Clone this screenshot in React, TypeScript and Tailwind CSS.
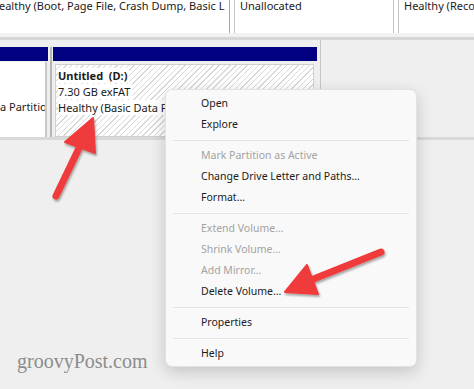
import React from 'react';

const font = { fontFamily: '"Noto Sans", "Open Sans", sans-serif' };

type Item = { label: string; disabled?: boolean } | 'sep';

const menu: Item[] = [
  { label: 'Open' },
  { label: 'Explore' },
  'sep',
  { label: 'Mark Partition as Active', disabled: true },
  { label: 'Change Drive Letter and Paths…' },
  { label: 'Format…' },
  'sep',
  { label: 'Extend Volume…', disabled: true },
  { label: 'Shrink Volume…', disabled: true },
  { label: 'Add Mirror…', disabled: true },
  { label: 'Delete Volume…' },
  'sep',
  { label: 'Properties' },
  'sep',
  { label: 'Help' },
];

const Arrows = () => (
  <svg className="absolute inset-0 pointer-events-none" width="474" height="389" viewBox="0 0 474 389">
    <defs>
      <filter id="sh" x="-20%" y="-20%" width="140%" height="140%">
        <feDropShadow dx="1" dy="2" stdDeviation="1.2" floodColor="#000" floodOpacity="0.35" />
      </filter>
    </defs>
    <g filter="url(#sh)" fill="#ef3b3b" stroke="#ef3b3b">
      <line x1="56" y1="196" x2="80" y2="146" strokeWidth="7" strokeLinecap="round" />
      <polygon points="93,118 65,142 95,153" strokeWidth="2" strokeLinejoin="round" />
      <line x1="381" y1="252" x2="311" y2="280" strokeWidth="7" strokeLinecap="round" />
      <polygon points="285,292 307,265 318,294" strokeWidth="2" strokeLinejoin="round" />
    </g>
  </svg>
);

export default function App() {
  return (
    <div className="relative w-[474px] h-[389px] overflow-hidden bg-[#efefef] text-[10.5px] text-[#1b1b1b]" style={font}>
      {/* top volume strip */}
      <div className="flex h-[33px] bg-white text-[11px]">
        <div className="w-[230px] shrink-0 border-r border-[#a8a8a8] overflow-hidden">
          <div className="-mt-[2px] whitespace-nowrap -ml-[1px] leading-[16px]">ealthy (Boot, Page File, Crash Dump, Basic L</div>
        </div>
        <div className="w-[160px] shrink-0 ml-[4px] border-l border-r border-[#c4c4c4] overflow-hidden">
          <div className="-mt-[2px] pl-[5px] whitespace-nowrap leading-[16px]">Unallocated</div>
        </div>
        <div className="flex-1 ml-[4px] border-l border-[#c4c4c4] overflow-hidden">
          <div className="-mt-[2px] pl-[5px] whitespace-nowrap leading-[16px]">Healthy (Recovery Partition)</div>
        </div>
      </div>
      <div className="h-[4px] bg-[#f1f1f1]" />
      <div className="h-[3px] bg-[#d6d6d6]" />

      {/* disk row */}
      <div className="flex h-[100px] border-b-[3px] border-[#d9d9d9] text-[11px]">
        <div className="w-[48px] shrink-0 pt-[7px] flex flex-col">
          <div className="h-[14px] bg-[#000080]" />
          <div className="flex-1 mt-[1px] mr-[1px] bg-white border-r-2 border-[#c8c8c8] overflow-hidden pt-[37px]">
            <div className="whitespace-nowrap text-right pr-[3px] leading-[16px]">a Partitio</div>
          </div>
        </div>
        <div className="w-[5px] shrink-0 flex justify-center">
          <div className="w-[2px] bg-[#b4b4b4] mt-[7px]" />
        </div>
        <div className="w-[264px] shrink-0 pt-[7px] flex flex-col">
          <div className="h-[14px] bg-[#000080]" />
          <div className="flex-1 mt-[3px] ml-[2px] mr-[3px] border border-[#d0d0d0] bg-[repeating-linear-gradient(135deg,#ffffff_0px,#ffffff_3px,#d9d9d9_3px,#d9d9d9_4px)] pt-[3px] pl-[2px] leading-[16px]">
            <div><span className="bg-white font-bold pr-[2px]">Untitled&nbsp;&nbsp;(D:)</span></div>
            <div><span className="bg-white pr-[2px]">7.30 GB exFAT</span></div>
            <div><span className="bg-white pr-[2px]">Healthy (Basic Data Partition)</span></div>
          </div>
        </div>
        <div className="w-[3px] shrink-0" />
        <div className="w-[1px] shrink-0 bg-[#c8c8c8]" />
      </div>

      {/* watermark */}
      <div className="absolute left-[17px] top-[346px] text-[20px] text-[#8c8c8c]" style={{ fontFamily: '"Liberation Serif", serif' }}>
        groovyPost.com
      </div>

      {/* context menu */}
      <div className="absolute left-[165px] top-[89px] w-[252px] bg-[#f9f9f9] border border-[#e2e2e2] rounded-[7px] shadow-[0_5px_16px_rgba(0,0,0,0.18)] pt-[3px] pb-[2px]">
        {menu.map((it, i) =>
          it === 'sep' ? (
            <div key={i} className="h-[10px] flex items-center px-[7px]">
              <div className="h-[1px] w-full bg-[#e4e4e4]" />
            </div>
          ) : (
            <div key={i} className={`h-[21px] flex items-center pl-[35px] whitespace-nowrap ${it.disabled ? 'text-[#a3a3a3]' : 'text-[#1b1b1b]'}`}>
              {it.label}
            </div>
          )
        )}
      </div>

      <Arrows />
    </div>
  );
}
